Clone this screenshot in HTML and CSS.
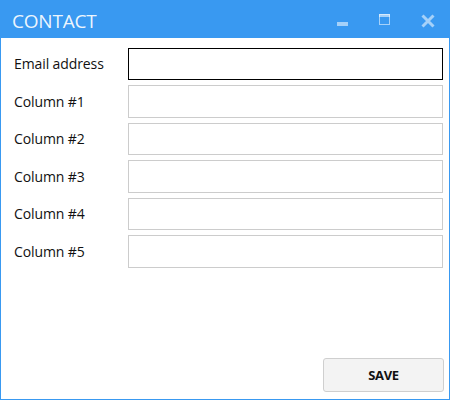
FILE: index.html
```html
<!DOCTYPE html>
<html>
<head>
<meta charset="utf-8">
<link rel="stylesheet" href="styles.css">
</head>
<body>
<div class="window">
  <div class="titlebar">
    <div class="title">CONTACT</div>
    <svg class="controls" width="110" height="38" viewBox="0 0 110 38">
      <rect x="7" y="22" width="11" height="4" fill="#ffffff" fill-opacity="0.55"/>
      <rect x="49.5" y="14.5" width="10" height="10" fill="none" stroke="#ffffff" stroke-opacity="0.55" stroke-width="1"/>
      <rect x="49" y="14" width="11" height="3" fill="#ffffff" fill-opacity="0.55"/>
      <path d="M92.5 15.5 L103.5 26.5 M103.5 15.5 L92.5 26.5" stroke="#ffffff" stroke-opacity="0.55" stroke-width="3" fill="none"/>
    </svg>
  </div>
  <div class="content">
    <form class="form">
      <label class="label">Email address</label>
      <input class="field focused" type="text">
      <label class="label">Column #1</label>
      <input class="field" type="text">
      <label class="label">Column #2</label>
      <input class="field" type="text">
      <label class="label">Column #3</label>
      <input class="field" type="text">
      <label class="label">Column #4</label>
      <input class="field" type="text">
      <label class="label">Column #5</label>
      <input class="field" type="text">
    </form>
    <div class="footer">
      <button class="save" type="button">SAVE</button>
    </div>
  </div>
</div>
</body>
</html>
```
FILE: styles.css
```css
html, body {
  margin: 0;
  padding: 0;
  background: #ffffff;
}
body {
  font-family: "Open Sans", "Noto Sans", sans-serif;
}
.window {
  width: 450px;
  height: 400px;
  box-sizing: border-box;
  display: flex;
  flex-direction: column;
  background: #ffffff;
}
.titlebar {
  height: 38px;
  flex: none;
  background: #3999f1;
  display: flex;
  align-items: flex-start;
}
.title {
  color: rgba(255, 255, 255, 0.92);
  font-size: 19px;
  font-weight: 400;
  line-height: 20px;
  margin-left: 12px;
  margin-top: 11px;
  letter-spacing: -0.2px;
}
.controls {
  margin-left: auto;
  margin-right: 10px;
  display: block;
}
.content {
  flex: 1;
  display: flex;
  flex-direction: column;
  border: 1px solid #3999f1;
  border-top: none;
}
.form {
  margin: 0;
  padding: 10px 6px 0 13px;
  display: grid;
  grid-template-columns: 114px 1fr;
  grid-template-rows: 32px 33px 32px 33px 32px 33px;
  row-gap: 5px;
  align-items: center;
}
.label {
  font-size: 14px;
  color: #111111;
  line-height: 18px;
  letter-spacing: -0.1px;
}
.field {
  box-sizing: border-box;
  width: 100%;
  height: 100%;
  margin: 0;
  border: 1px solid #cccccc;
  background: #ffffff;
  padding: 0;
  outline: none;
}
.field.focused {
  border-color: #000000;
}
.footer {
  margin-top: auto;
  display: flex;
  justify-content: flex-end;
  padding: 0 5px 7px 0;
}
.save {
  width: 121px;
  height: 34px;
  box-sizing: border-box;
  border: 1px solid #cfcfcf;
  border-radius: 3px;
  background: #f3f3f3;
  font-family: "Open Sans", "Noto Sans", sans-serif;
  font-size: 13px;
  font-weight: 700;
  color: #111111;
  padding: 0;
  letter-spacing: -0.4px;
}
```
